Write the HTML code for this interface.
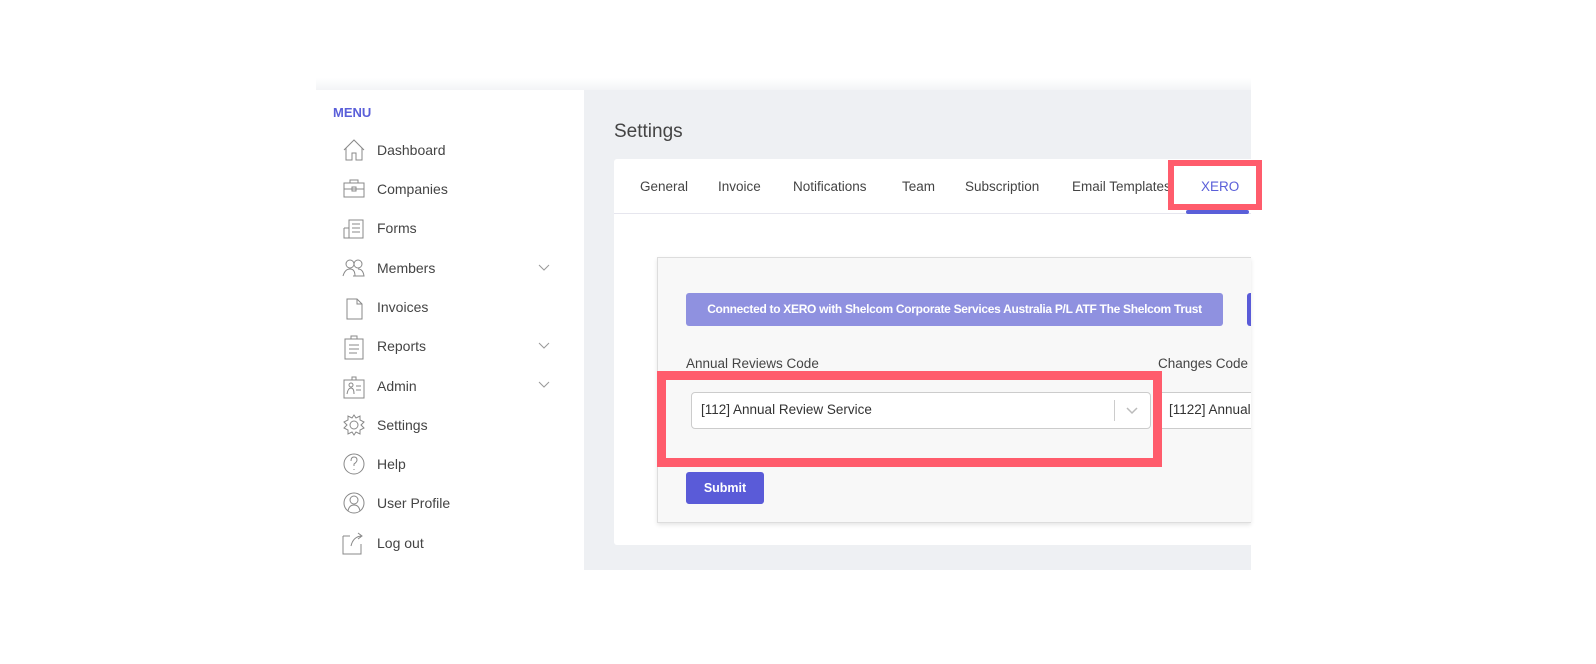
<!DOCTYPE html>
<html><head><style>
*{box-sizing:border-box;margin:0;padding:0}
body{width:1596px;height:664px;background:#fff;font-family:"Liberation Sans",sans-serif;position:relative;overflow:hidden}
.abs{position:absolute}
.top{left:316px;top:78px;width:935px;height:12px;background:linear-gradient(#fff,#f3f4f6)}
.side{left:316px;top:90px;width:268px;height:480px;background:#fff}
.main{left:584px;top:90px;width:667px;height:480px;background:#eef0f3;overflow:hidden}
.menu{left:333px;top:105px;font-size:13px;font-weight:bold;color:#5a5fd9}
.item{left:377px;font-size:14px;color:#444;}
.tab{top:179px;font-size:13.5px;color:#444}
</style></head><body>
<div class="abs top"></div>
<div class="abs side"></div>
<div class="abs menu">MENU</div>

<div class="abs item" style="top:142px">Dashboard</div>
<div class="abs item" style="top:181px">Companies</div>
<div class="abs item" style="top:220px">Forms</div>
<div class="abs item" style="top:260px">Members</div>
<div class="abs item" style="top:299px">Invoices</div>
<div class="abs item" style="top:338px">Reports</div>
<div class="abs item" style="top:378px">Admin</div>
<div class="abs item" style="top:417px">Settings</div>
<div class="abs item" style="top:456px">Help</div>
<div class="abs item" style="top:495px">User Profile</div>
<div class="abs item" style="top:535px">Log out</div>

<svg class="abs" style="left:340px;top:136px" width="34" height="420" fill="none" stroke="#888" stroke-width="1">
<path d="M4 14 L14 4 L24 14 M6 12 V24 H12 V17 H16 V24 H22 V12"/>
<rect x="4" y="47" width="20" height="14"/><path d="M10 47 V44 H18 V47 M4 53 H24"/><rect x="12" y="51" width="4" height="4"/>
<rect x="9" y="84" width="14" height="18"/><path d="M4 92 H9 M4 92 V102 H23 M12 88 H20 M12 92 H20 M12 96 H20"/>
<circle cx="10" cy="128" r="4"/><circle cx="18" cy="128" r="4"/><path d="M3 140 Q5 133 10 133 Q15 133 15 140 M13 140 H24 Q23 133 18 133"/>
<path d="M7 163 H17 L22 168 V183 H7 Z M17 163 V168 H22"/>
<rect x="5" y="203" width="18" height="20"/><path d="M11 203 V200 H17 V203 M9 209 H19 M9 213 H19 M9 217 H17"/>
<rect x="4" y="244" width="20" height="18"/><path d="M12 244 V241 H16 V244 M7 258 Q8 252 11 252 Q14 252 14 258 M16 250 H21 M16 254 H21"/><circle cx="11" cy="249" r="2"/>
<circle cx="14" cy="289" r="4"/><path d="M14 279 L16 282 L20 280 L20 284 L24 286 L21 289 L24 292 L20 294 L20 298 L16 296 L14 299 L12 296 L8 298 L8 294 L4 292 L7 289 L4 286 L8 284 L8 280 L12 282 Z"/>
<circle cx="14" cy="328" r="10"/><path d="M11 325 Q11 321 14 321 Q17 321 17 324 Q17 326 14 328 V330 M14 333 V334"/>
<circle cx="14" cy="367" r="10"/><circle cx="14" cy="364" r="4"/><path d="M8 375 Q9 369 14 369 Q19 369 20 375"/>
<path d="M3 400 V418 H21 V408 M3 400 H10 M11 410 Q13 401 21 400 M18 397 L22 400 L18 403"/>
</svg>
<svg class="abs" style="left:538px;top:264px" width="12" height="130" fill="none" stroke="#999"><path d="M1 1 L6 6 L11 1 M1 79 L6 84 L11 79 M1 118 L6 123 L11 118"/></svg>

<div class="abs main"></div>
<div class="abs" style="left:614px;top:121px;font-size:19px;color:#444">Settings</div>
<div class="abs" style="left:614px;top:159px;width:637px;height:386px;background:#fff;border-radius:3px 0 0 3px"></div>
<div class="abs" style="left:614px;top:213px;width:637px;height:1px;background:#e6e6ee"></div>
<div class="abs tab" style="left:640px">General</div>
<div class="abs tab" style="left:718px">Invoice</div>
<div class="abs tab" style="left:793px">Notifications</div>
<div class="abs tab" style="left:902px">Team</div>
<div class="abs tab" style="left:965px">Subscription</div>
<div class="abs tab" style="left:1072px">Email Templates</div>
<div class="abs tab" style="left:1201px;color:#5a5fd9">XERO</div>
<div class="abs" style="left:1186px;top:210px;width:63px;height:4px;background:#5a5fd9;border-radius:2px"></div>
<div class="abs" style="left:1168px;top:160px;width:94px;height:50px;border:6px solid #ff5c6c"></div>

<div class="abs" style="left:657px;top:257px;width:594px;height:266px;background:#f8f8f8;border:1px solid #ddd;border-right:none;box-shadow:0 2px 4px rgba(0,0,0,.1)"></div>
<div class="abs" style="left:686px;top:293px;width:537px;height:33px;background:#8f91e0;border-radius:3px;color:#fff;font-size:12px;font-weight:bold;line-height:33px;text-align:center;white-space:nowrap;letter-spacing:-0.3px;overflow:hidden">Connected to XERO with Shelcom Corporate Services Australia P/L ATF The Shelcom Trust</div>
<div class="abs" style="left:1247px;top:293px;width:4px;height:33px;background:#5a5bd8;border-radius:3px 0 0 3px"></div>
<div class="abs" style="left:686px;top:356px;font-size:13.5px;color:#444">Annual Reviews Code</div>
<div class="abs" style="left:1158px;top:356px;font-size:13.5px;color:#444;width:93px;overflow:hidden;white-space:nowrap">Changes Code</div>
<div class="abs" style="left:691px;top:392px;width:460px;height:37px;background:#fff;border:1px solid #ccc;border-radius:4px"></div>
<div class="abs" style="left:701px;top:402px;font-size:13.5px;color:#333">[112] Annual Review Service</div>
<div class="abs" style="left:1114px;top:400px;width:1px;height:21px;background:#ccc"></div>
<svg class="abs" style="left:1126px;top:407px" width="12" height="8" fill="none" stroke="#bbb" stroke-width="1.5"><path d="M1 1 L6 6 L11 1"/></svg>
<div class="abs" style="left:1158px;top:392px;width:93px;height:37px;background:#fff;border:1px solid #ccc;border-right:none;border-radius:4px 0 0 4px"></div>
<div class="abs" style="left:1169px;top:402px;font-size:13.5px;color:#333;width:82px;overflow:hidden;white-space:nowrap">[1122] Annual</div>
<div class="abs" style="left:657px;top:371px;width:505px;height:96px;border:9px solid #ff5c6c"></div>
<div class="abs" style="left:686px;top:472px;width:78px;height:32px;background:#5a5bd8;border-radius:3px;color:#fff;font-size:12.5px;font-weight:bold;line-height:32px;text-align:center">Submit</div>
</body></html>
